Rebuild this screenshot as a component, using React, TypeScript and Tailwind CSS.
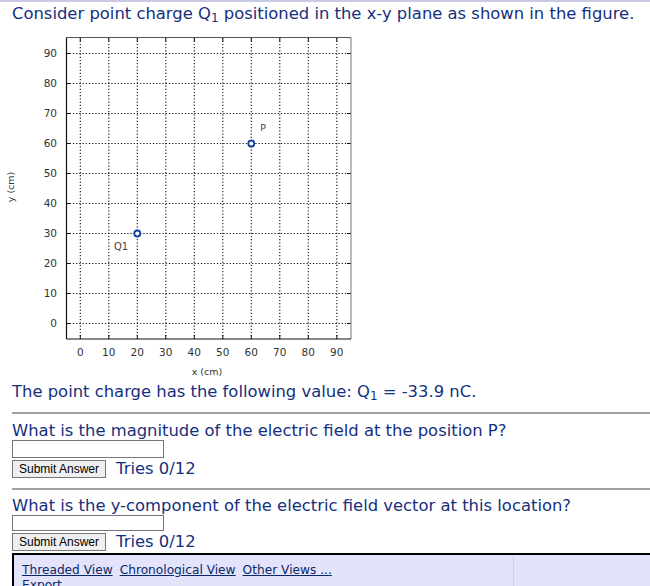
import React from "react";

const xTicks = [0, 10, 20, 30, 40, 50, 60, 70, 80, 90];
const yTicks = [0, 10, 20, 30, 40, 50, 60, 70, 80, 90];
const X0 = 80.3;
const DX = 2.85;
const Y0 = 293.5;
const DY = 3.0;
const left = 66.5;
const right = 351;
const top = 7.5;
const bottom = 309;

function px(v: number) {
  return X0 + v * DX;
}
function py(v: number) {
  return Y0 - v * DY;
}

function Plot() {
  return (
    <svg width="360" height="352" viewBox="0 0 360 352" className="block">
      <rect x="0" y="0" width="360" height="352" fill="#ffffff" />
      {xTicks.map((v) => (
        <g key={"x" + v}>
          <line x1={px(v)} y1={top} x2={px(v)} y2={bottom} stroke="#111" strokeWidth="1.1" strokeDasharray="1.2 2" />
          <line x1={px(v)} y1={bottom} x2={px(v)} y2={bottom - 4} stroke="#111" strokeWidth="1" />
          <line x1={px(v)} y1={top} x2={px(v)} y2={top + 4} stroke="#111" strokeWidth="1" />
          <text x={px(v)} y={326} textAnchor="middle" fontSize="10.5" fill="#333" fontFamily="DejaVu Sans, sans-serif">
            {v}
          </text>
        </g>
      ))}
      {yTicks.map((v) => (
        <g key={"y" + v}>
          <line x1={left} y1={py(v)} x2={right} y2={py(v)} stroke="#111" strokeWidth="1.1" strokeDasharray="1.2 2" />
          <line x1={left} y1={py(v)} x2={left + 4} y2={py(v)} stroke="#111" strokeWidth="1" />
          <line x1={right} y1={py(v)} x2={right - 4} y2={py(v)} stroke="#111" strokeWidth="1" />
          <text x={57} y={py(v) + 3.8} textAnchor="end" fontSize="10.5" fill="#333" fontFamily="DejaVu Sans, sans-serif">
            {v}
          </text>
        </g>
      ))}
      <line x1={left} y1={top} x2={right} y2={top} stroke="#555" strokeWidth="1" />
      <line x1={right} y1={top} x2={right} y2={bottom} stroke="#777" strokeWidth="1" />
      <line x1={left} y1={top} x2={left} y2={bottom} stroke="#111" strokeWidth="1.2" />
      <line x1={left} y1={bottom} x2={right} y2={bottom} stroke="#111" strokeWidth="1.2" />
      <text x={207} y={345} textAnchor="middle" fontSize="9.5" fill="#333" fontFamily="DejaVu Sans, sans-serif">
        x (cm)
      </text>
      <text
        x={0}
        y={0}
        transform="translate(14 157) rotate(-90)"
        textAnchor="middle"
        fontSize="9.5"
        fill="#333"
        fontFamily="DejaVu Sans, sans-serif"
      >
        y (cm)
      </text>
      <circle cx={px(60)} cy={py(60)} r="3" fill="#fff" stroke="#1240a0" strokeWidth="1.8" />
      <circle cx={px(20)} cy={py(30)} r="3" fill="#fff" stroke="#1240a0" strokeWidth="1.8" />
      <text x={263} y={101} textAnchor="middle" fontSize="9.5" fill="#444" fontFamily="DejaVu Sans, sans-serif">
        P
      </text>
      <text x={121} y={220} textAnchor="middle" fontSize="10" fill="#444" fontFamily="DejaVu Sans, sans-serif">
        Q1
      </text>
    </svg>
  );
}

function Question({ text, inputH }: { text: string; inputH: string }) {
  return (
    <div>
      <div className="text-[16.4px] leading-[18px]">{text}</div>
      <input type="text" className={"block w-[152px] border border-[#767676] bg-white " + inputH} />
      <div className="flex items-center gap-[10px] mt-[2px]">
        <button className="h-[18px] px-[6px] border border-[#767676] bg-[#efefef] text-[12px] leading-[14px] text-black font-['Liberation_Sans',sans-serif]">
          Submit Answer
        </button>
        <span className="text-[16.4px] leading-[18px]">Tries 0/12</span>
      </div>
    </div>
  );
}

export default function App() {
  return (
    <div className="w-[650px] h-[586px] overflow-hidden bg-white text-[#15307e] font-['DejaVu_Sans',Verdana,sans-serif]">
      <div className="h-[2px] bg-[#c9c9e3]" />
      <div className="pl-[12px] pt-[2px] text-[16.4px] leading-[20px]">
        Consider point charge Q<sub className="text-[12px]">1</sub> positioned in the x-y plane as shown in the figure.
      </div>
      <div className="mt-[6px]">
        <Plot />
      </div>
      <div className="pl-[12px]">
        <div className="text-[16.4px] leading-[20px]">
          The point charge has the following value: Q<sub className="text-[12px]">1</sub> = -33.9 nC.
        </div>
        <hr className="mt-[10px] border-t-2 border-[#a0a0a0]" />
        <div className="mt-[8px]">
          <Question text="What is the magnitude of the electric field at the position P?" inputH="h-[18px]" />
        </div>
        <hr className="mt-[10px] border-t-2 border-[#a0a0a0]" />
        <div className="mt-[7px]">
          <Question text="What is the y-component of the electric field vector at this location?" inputH="h-[16px]" />
        </div>
        <div className="mt-[2px] border-t-2 border-l-2 border-black bg-[#e3e3fb] h-[40px] text-[12.2px] leading-[15px]">
          <div className="w-[500px] h-full border-r border-[#d2d2ea] pl-[8px] pt-[8px]">
            <div className="flex gap-[7px]">
              <a className="underline text-[#0a2868]">Threaded View</a>
              <a className="underline text-[#0a2868]">Chronological View</a>
              <a className="underline text-[#0a2868]">Other Views ...</a>
            </div>
            <a className="underline text-[#0a2868]">Export</a>
          </div>
        </div>
      </div>
    </div>
  );
}
